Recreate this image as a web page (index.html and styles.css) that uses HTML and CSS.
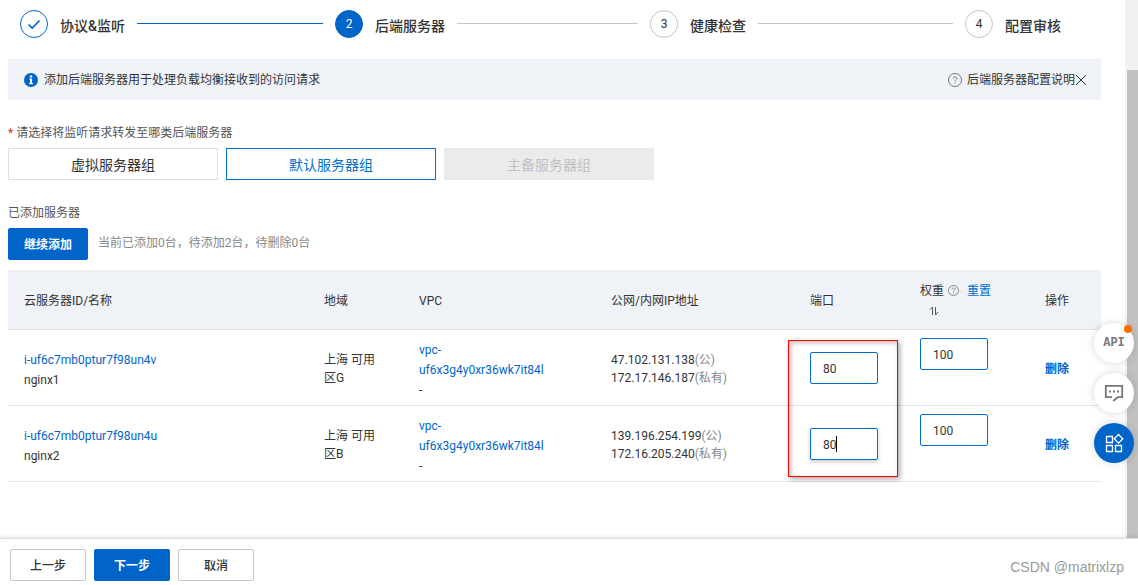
FILE: index.html
```html
<!DOCTYPE html>
<html lang="zh-CN">
<head>
<meta charset="utf-8">
<title>后端服务器</title>
<link rel="stylesheet" href="styles.css">
</head>
<body>
<div class="viewport">
  <main class="content">
    <ol class="steps">
      <li class="step step-done">
        <span class="step-mark"><svg width="14" height="14" viewBox="0 0 14 14" fill="none" stroke="currentColor" stroke-width="1.6"><path d="M1.5 7.5l3.7 3.6 7.3-7.6"/></svg></span>
        <span class="step-label">协议&amp;监听</span>
      </li>
      <li class="step step-current"><span class="step-mark">2</span><span class="step-label">后端服务器</span></li>
      <li class="step"><span class="step-mark">3</span><span class="step-label">健康检查</span></li>
      <li class="step step-last"><span class="step-mark">4</span><span class="step-label">配置审核</span></li>
    </ol>

    <div class="notice">
      <svg class="notice-info" width="14" height="14" viewBox="0 0 14 14"><circle cx="7" cy="7" r="7" fill="#0064c8"/><path d="M5.2 5.5h2.8v4.6h1v1.1H5.1v-1.1h1V6.6h-.9z" fill="#fff"/><circle cx="7" cy="3.4" r="1.2" fill="#fff"/></svg>
      <span>添加后端服务器用于处理负载均衡接收到的访问请求</span>
      <a class="notice-help" href="#">
        <svg width="14" height="14" viewBox="0 0 14 14" fill="none" stroke="#777"><circle cx="7" cy="7" r="6.5"/><path d="M5.2 5.6c0-2.4 3.6-2.3 3.6-.1 0 1.3-1.8 1.3-1.8 2.8M7 9.5v1.1"/></svg>
        后端服务器配置说明</a>
      <button class="notice-close" type="button" aria-label="关闭"><svg width="12" height="12" viewBox="0 0 12 12" stroke="#333"><path d="M1 1l10 10M11 1L1 11"/></svg></button>
    </div>

    <p class="field-label"><span class="required">*</span> 请选择将监听请求转发至哪类后端服务器</p>
    <div class="options">
      <button class="option" type="button">虚拟服务器组</button>
      <button class="option option-active" type="button">默认服务器组</button>
      <button class="option" type="button" disabled>主备服务器组</button>
    </div>

    <p class="field-label added-label">已添加服务器</p>
    <div class="added-bar">
      <button class="btn btn-primary btn-add" type="button">继续添加</button>
      <span class="added-summary">当前已添加0台，待添加2台，待删除0台</span>
    </div>

    <div class="table-wrap">
      <table class="servers">
        <colgroup><col class="col-id"><col class="col-region"><col class="col-vpc"><col class="col-ip"><col class="col-port"><col class="col-weight"><col class="col-action"></colgroup>
        <thead>
          <tr>
            <th>云服务器ID/名称</th>
            <th>地域</th>
            <th>VPC</th>
            <th>公网/内网IP地址</th>
            <th>端口</th>
            <th>
              <span class="weight-head">权重
                <svg width="11" height="11" viewBox="0 0 11 11" fill="none" stroke="#888"><circle cx="5.5" cy="5.5" r="5"/><path d="M4 4.4c0-1.9 3-1.9 3-.1 0 1.1-1.5 1.1-1.5 2.3M5.5 7.6v1"/></svg>
                <a class="reset" href="#">重置</a></span>
              <svg class="sort" width="10" height="10" viewBox="0 0 10 10" fill="none" stroke="#555"><path d="M1 3.5L3.5 1v8M6.5 1v8L9 6"/></svg>
            </th>
            <th>操作</th>
          </tr>
        </thead>
        <tbody>
          <tr>
            <td><a href="#">i-uf6c7mb0ptur7f98un4v</a><br>nginx1</td>
            <td class="compact region-cell">上海 可用区G</td>
            <td><a href="#">vpc-<br>uf6x3g4y0xr36wk7it84l</a><br>-</td>
            <td class="compact">47.102.131.138<span class="muted">(公)</span><br>172.17.146.187<span class="muted">(私有)</span></td>
            <td class="port-cell"><input class="num" type="text" value="80" aria-label="nginx1 端口"></td>
            <td class="weight-cell"><input class="num" type="text" value="100" aria-label="nginx1 权重"></td>
            <td class="action-cell"><a class="delete" href="#">删除</a></td>
          </tr>
          <tr>
            <td><a href="#">i-uf6c7mb0ptur7f98un4u</a><br>nginx2</td>
            <td class="compact region-cell">上海 可用区B</td>
            <td><a href="#">vpc-<br>uf6x3g4y0xr36wk7it84l</a><br>-</td>
            <td class="compact">139.196.254.199<span class="muted">(公)</span><br>172.16.205.240<span class="muted">(私有)</span></td>
            <td class="port-cell"><span class="editing"><input class="num num-focus" type="text" value="80" aria-label="nginx2 端口"><span class="caret"></span></span></td>
            <td class="weight-cell"><input class="num" type="text" value="100" aria-label="nginx2 权重"></td>
            <td class="action-cell"><a class="delete" href="#">删除</a></td>
          </tr>
        </tbody>
      </table>
      <div class="highlight"></div>
    </div>
  </main>
  <div class="scrollbar"><div class="thumb"></div></div>

  <div class="floats">
    <button class="float float-api" type="button">API<span class="dot"></span></button>
    <button class="float" type="button" aria-label="反馈"><svg width="20" height="18" viewBox="0 0 20 18" fill="none" stroke="#777" stroke-width="1.8"><path d="M8 13.2H1.8V1.8h16.4v11.4h-4.4L9.2 17"/><path d="M5 7.5h2M9 7.5h2M13 7.5h2"/></svg></button>
    <button class="float float-blue" type="button" aria-label="工具"><svg width="20" height="20" viewBox="0 0 20 20" fill="none" stroke="#fff" stroke-width="1.3"><path d="M2.5 3.5h6v6h-6zM2.5 12.5h6v6h-6zM11.5 12.5h6v6h-6zM14.5 1.5l4.3 4.3-4.3 4.3-4.3-4.3z"/></svg></button>
  </div>
</div>

<footer class="footer">
  <button class="btn" type="button">上一步</button>
  <button class="btn btn-primary" type="button">下一步</button>
  <button class="btn" type="button">取消</button>
  <span class="watermark">CSDN @matrixlzp</span>
</footer>
</body>
</html>
```
FILE: styles.css
```css
* { box-sizing: border-box; }

body {
  margin: 0;
  height: 100vh;
  display: flex;
  flex-direction: column;
  overflow: hidden;
  background: #fff;
  color: #333;
  font: 12px/20px Roboto, "Noto Sans CJK SC", sans-serif;
}

button, input { font: inherit; color: inherit; }
button { padding: 0; cursor: pointer; }
a { color: #0064c8; text-decoration: none; }
svg { display: block; flex: none; }

.viewport {
  position: relative;
  flex: 1;
  min-height: 0;
  display: flex;
}

.content {
  flex: 1;
  min-width: 0;
  padding: 10px 24px 0 8px;
}

.steps {
  display: flex;
  margin: 0 0 21px;
  padding: 0 40px 0 12px;
  list-style: none;
}
.step {
  flex: 1;
  display: flex;
  align-items: center;
  gap: 12px;
  padding-right: 12px;
}
.step::after {
  content: "";
  flex: 1;
  height: 1px;
  margin-bottom: 1px;
  background: #c4c6cc;
}
.step-last { flex: none; padding-right: 0; }
.step-last::after { display: none; }
.step-mark {
  display: flex;
  align-items: center;
  justify-content: center;
  width: 28px;
  height: 28px;
  border: 1px solid #c4c6cc;
  border-radius: 50%;
}
.step-label {
  padding-top: 3px;
  font-size: 14px;
  font-weight: 500;
}
.step-done .step-mark { border-color: #0064c8; color: #0064c8; }
.step-done::after { background: #0064c8; }
.step-current .step-mark { border-color: #0064c8; background: #0064c8; color: #fff; }

.notice {
  display: flex;
  align-items: center;
  height: 41px;
  padding: 0 14px 0 16px;
  border-radius: 2px;
  background: #eff2f7;
}
.notice-info { margin-right: 6px; }
.notice-help {
  display: flex;
  align-items: center;
  gap: 5px;
  margin-left: auto;
  color: #333;
}
.notice-close { border: 0; background: none; }

.field-label {
  margin: 23px 0 5px;
  color: #555;
}
.required { color: #d93026; }
.options { display: flex; gap: 8px; }
.option {
  width: 210px;
  height: 32px;
  padding-top: 1px;
  border: 1px solid #dedede;
  background: #fff;
  font-size: 14px;
}
.option-active { border-color: #0070cc; color: #0070cc; }
.option:disabled {
  border-color: #ebebeb;
  background: #ebebeb;
  color: #c1c1c1;
}

.added-bar { display: flex; gap: 10px; margin-bottom: 10px; }
.added-summary { padding-top: 5px; color: #888; }

.btn {
  width: 76px;
  height: 32px;
  padding-top: 2px;
  border: 1px solid #c0c6cc;
  border-radius: 2px;
  background: #fff;
  font-weight: 500;
}
.btn-primary {
  border-color: #0064c8;
  background: #0064c8;
  color: #fff;
  font-weight: 700;
}
.btn-add { width: 80px; }

.table-wrap { position: relative; }
.servers {
  width: 100%;
  border-collapse: separate;
  border-spacing: 0;
  table-layout: fixed;
}
.col-region { width: 95px; }
.col-vpc { width: 192px; }
.col-ip { width: 199px; }
.col-port { width: 110px; }
.col-weight { width: 125px; }
.col-action { width: 72px; }
.servers th {
  height: 60px;
  padding: 2px 16px 0;
  border-bottom: 1px solid #e3e4e6;
  background: #eff2f7;
  font-weight: 400;
  text-align: left;
}
.servers td {
  height: 76px;
  padding: 10px 16px 5px;
  border-bottom: 1px solid #e3e4e6;
}
.servers .compact { padding-top: 8px; line-height: 18px; }
.servers .region-cell { padding-right: 24px; }
.servers .port-cell { padding: 8px 16px 7px; }
.servers .action-cell { padding-top: 8px; }
.servers .weight-cell { padding-top: 8px; vertical-align: top; }
.weight-head { display: flex; align-items: center; gap: 4px; }
.reset { margin-left: 4px; color: #0070cc; }
.sort { margin: 5px 0 5px 9px; }
.muted { color: #888; }
.delete { font-weight: 700; }

.num {
  display: block;
  width: 68px;
  height: 32px;
  padding: 2px 12px 0;
  border: 1px solid #0070cc;
  border-radius: 2px;
  background: #fff;
  outline: 0;
}
.num-focus { box-shadow: 0 2px 4px rgba(0, 0, 0, .2); }
.editing { position: relative; display: block; }
.caret {
  position: absolute;
  left: 26px;
  top: 8px;
  width: 1px;
  height: 16px;
  background: #000;
}

.highlight {
  position: absolute;
  top: 70px;
  right: 203px;
  width: 110px;
  height: 137px;
  border: 1px solid #f00;
  box-shadow: 2px 2px 5px rgba(0, 0, 0, .35), inset 2px 2px 5px rgba(0, 0, 0, .25);
  pointer-events: none;
}

.scrollbar {
  width: 13px;
  padding: 70px 0 0 2px;
  background: #f1f1f1;
}
.thumb { height: 100%; background: #c1c1c1; }

.floats {
  position: absolute;
  top: 323px;
  right: 4px;
  display: flex;
  flex-direction: column;
  gap: 10px;
}
.float {
  position: relative;
  display: flex;
  align-items: center;
  justify-content: center;
  width: 40px;
  height: 40px;
  border: 0;
  border-radius: 50%;
  background: #fff;
  box-shadow: 0 0 8px rgba(0, 0, 0, .16);
}
.float-api {
  color: #777;
  font-family: "Liberation Mono", monospace;
  font-size: 12px;
  font-weight: 700;
}
.float-blue { background: #0064c8; }
.dot {
  position: absolute;
  top: 2px;
  right: 2px;
  width: 8px;
  height: 8px;
  border-radius: 50%;
  background: #ff6a00;
}

.footer {
  position: relative;
  display: flex;
  align-items: center;
  gap: 8px;
  padding: 10px 14px 4px 10px;
  border-top: 1px solid #dedede;
  background: #fff;
  box-shadow: 0 -1px 4px rgba(0, 0, 0, .12);
}
.watermark {
  margin-left: auto;
  padding-top: 4px;
  color: #999;
  font-family: "Liberation Sans", sans-serif;
  font-size: 14px;
}
```
